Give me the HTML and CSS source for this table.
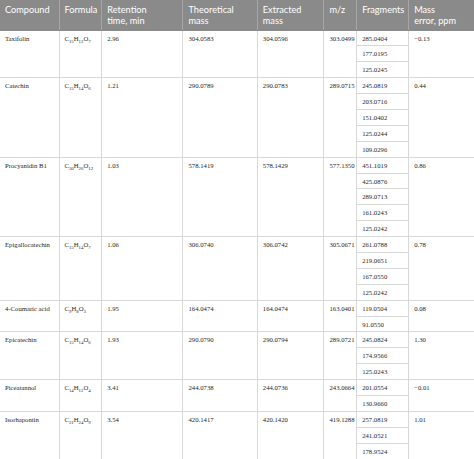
FILE: index.html
```html
<!DOCTYPE html>
<html>
<head>
<meta charset="utf-8">
<link rel="stylesheet" href="styles.css">
</head>
<body>
<table class="tbl">
<colgroup>
<col class="c1"><col class="c2"><col class="c3"><col class="c4"><col class="c5"><col class="c6"><col class="c7"><col class="c8">
</colgroup>
<thead>
<tr>
<th>Compound</th><th>Formula</th><th><span class="ln">Retention</span><span class="ln">time, min</span></th><th><span class="ln">Theoretical</span><span class="ln">mass</span></th><th><span class="ln">Extracted</span><span class="ln">mass</span></th><th>m/z</th><th>Fragments</th><th><span class="ln">Mass</span><span class="ln">error, ppm</span></th>
</tr>
</thead>
<tbody>
<tr><td rowspan="3">Taxifolin</td><td rowspan="3">C<sub>15</sub>H<sub>12</sub>O<sub>7</sub></td><td rowspan="3">2.96</td><td rowspan="3">304.0583</td><td rowspan="3">304.0596</td><td rowspan="3">303.0499</td><td class="fr">285.0404</td><td rowspan="3">−0.13</td></tr>
<tr><td class="fr">177.0195</td></tr>
<tr><td class="fr">125.0245</td></tr>

<tr><td rowspan="5">Catechin</td><td rowspan="5">C<sub>15</sub>H<sub>14</sub>O<sub>6</sub></td><td rowspan="5">1.21</td><td rowspan="5">290.0789</td><td rowspan="5">290.0783</td><td rowspan="5">289.0715</td><td class="fr">245.0819</td><td rowspan="5">0.44</td></tr>
<tr><td class="fr">203.0716</td></tr>
<tr><td class="fr">151.0402</td></tr>
<tr><td class="fr">125.0244</td></tr>
<tr><td class="fr">109.0296</td></tr>

<tr><td rowspan="5">Procyanidin B1</td><td rowspan="5">C<sub>30</sub>H<sub>26</sub>O<sub>12</sub></td><td rowspan="5">1.03</td><td rowspan="5">578.1419</td><td rowspan="5">578.1429</td><td rowspan="5">577.1350</td><td class="fr">451.1019</td><td rowspan="5">0.86</td></tr>
<tr><td class="fr">425.0876</td></tr>
<tr><td class="fr">289.0713</td></tr>
<tr><td class="fr">161.0243</td></tr>
<tr><td class="fr">125.0242</td></tr>

<tr><td rowspan="4">Epigallocatechin</td><td rowspan="4">C<sub>15</sub>H<sub>14</sub>O<sub>7</sub></td><td rowspan="4">1.06</td><td rowspan="4">306.0740</td><td rowspan="4">306.0742</td><td rowspan="4">305.0671</td><td class="fr">261.0788</td><td rowspan="4">0.78</td></tr>
<tr><td class="fr">219.0651</td></tr>
<tr><td class="fr">167.0550</td></tr>
<tr><td class="fr">125.0242</td></tr>

<tr><td rowspan="2">4-Coumaric acid</td><td rowspan="2">C<sub>9</sub>H<sub>8</sub>O<sub>3</sub></td><td rowspan="2">1.95</td><td rowspan="2">164.0474</td><td rowspan="2">164.0474</td><td rowspan="2">163.0401</td><td class="fr">119.0504</td><td rowspan="2">0.08</td></tr>
<tr><td class="fr">91.0550</td></tr>

<tr><td rowspan="3">Epicatechin</td><td rowspan="3">C<sub>15</sub>H<sub>14</sub>O<sub>6</sub></td><td rowspan="3">1.93</td><td rowspan="3">290.0790</td><td rowspan="3">290.0794</td><td rowspan="3">289.0721</td><td class="fr">245.0824</td><td rowspan="3">1.30</td></tr>
<tr><td class="fr">174.9566</td></tr>
<tr><td class="fr">125.0243</td></tr>

<tr><td rowspan="2">Piceatannol</td><td rowspan="2">C<sub>14</sub>H<sub>12</sub>O<sub>4</sub></td><td rowspan="2">3.41</td><td rowspan="2">244.0738</td><td rowspan="2">244.0736</td><td rowspan="2">243.0664</td><td class="fr">201.0554</td><td rowspan="2">−0.01</td></tr>
<tr><td class="fr">130.9660</td></tr>

<tr><td rowspan="3">Isorhapontin</td><td rowspan="3">C<sub>21</sub>H<sub>24</sub>O<sub>9</sub></td><td rowspan="3">3.54</td><td rowspan="3">420.1417</td><td rowspan="3">420.1420</td><td rowspan="3">419.1288</td><td class="fr">257.0819</td><td rowspan="3">1.01</td></tr>
<tr><td class="fr">241.0521</td></tr>
<tr><td class="fr">178.9524</td></tr>
</tbody>
</table>
</body>
</html>
```
FILE: styles.css
```css
html, body {
  margin: 0;
  padding: 0;
  background: #ffffff;
}
.tbl {
  width: 474px;
  table-layout: fixed;
  border-collapse: collapse;
  border-spacing: 0;
}
.c1 { width: 59px; }
.c2 { width: 42.7px; }
.c3 { width: 81.3px; }
.c4 { width: 74.3px; }
.c5 { width: 66.7px; }
.c6 { width: 32.7px; }
.c7 { width: 52px; }
.c8 { width: 65.3px; }

.tbl th {
  background: #8a8a8a;
  color: #ffffff;
  font-family: "Lato", "Open Sans", sans-serif;
  font-weight: 400;
  font-size: 9.2px;
  line-height: 10.5px;
  text-align: left;
  vertical-align: top;
  height: 30px;
  box-sizing: border-box;
  padding: 5px 3px 0 5px;
  border-left: 1px solid #a6a6a6;
  border-bottom: 1px solid #8a8a8a;
  white-space: nowrap;
}
.tbl th:first-child { border-left: none; }
.tbl th .ln {
  display: block;
  height: 10.5px;
  line-height: 10.5px;
}

.tbl td {
  font-family: "Liberation Serif", "Times New Roman", serif;
  font-size: 6.7px;
  line-height: 8px;
  color: #1f1f1f;
  text-align: left;
  vertical-align: top;
  padding: 4px 2px 0 5px;
  border: 1px solid #d8d8d8;
  height: 15.9px;
  box-sizing: border-box;
  white-space: nowrap;
}
.tbl tr > td:first-child { border-left: none; }
.tbl td:last-child { border-right: none; }
.tbl sub {
  font-size: 4.8px;
  line-height: 0;
  vertical-align: -1.5px;
}
```
